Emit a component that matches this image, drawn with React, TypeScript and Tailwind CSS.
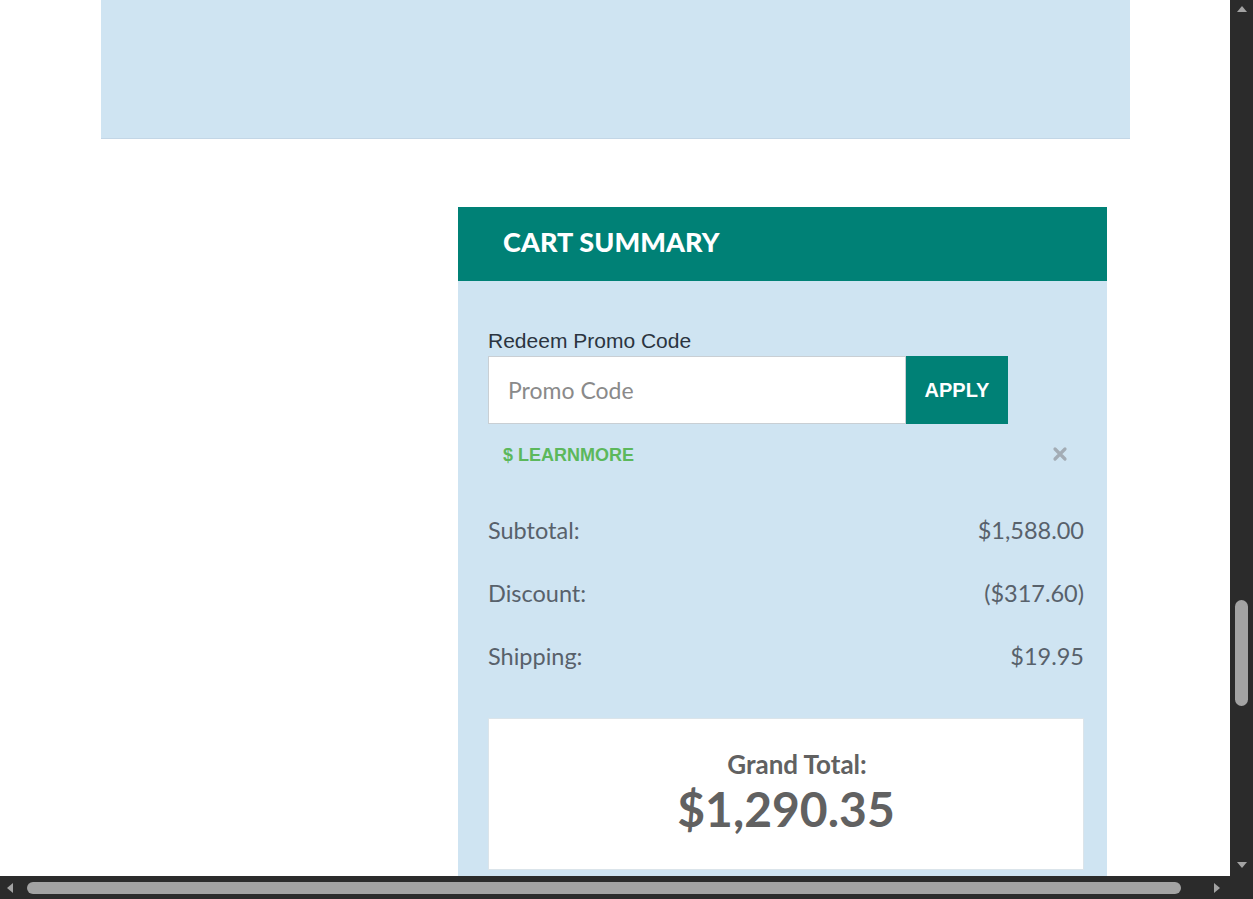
const rows = [
  { label: "Subtotal:", value: "$1,588.00" },
  { label: "Discount:", value: "($317.60)" },
  { label: "Shipping:", value: "$19.95" },
];

function Triangle({ dir }: { dir: "up" | "down" | "left" | "right" }) {
  const points: Record<string, string> = {
    up: "1,8 6,2 11,8",
    down: "1,2 6,8 11,2",
    left: "8,1 2,6 8,11",
    right: "3,1 9,6 3,11",
  };
  return (
    <svg width="12" height="12" viewBox="0 0 12 12">
      <polygon points={points[dir]} fill="#a3a3a3" />
    </svg>
  );
}

export default function App() {
  return (
    <div className="w-[1253px] h-[899px] overflow-hidden flex flex-col bg-white">
      <div className="flex h-[876px]">
        {/* Page */}
        <div className="flex-1 overflow-hidden bg-white">
          <div className="ml-[101px] w-[1029px] h-[139px] bg-[#cfe4f2] border-b border-[#c3d6e6]" />

          <div className="ml-[458px] mt-[68px] w-[649px]">
            {/* Header */}
            <div className="h-[74px] bg-[#008176] flex items-center pl-[45px]">
              <h2 className="text-white text-[27px] font-black tracking-[0.1px] font-['Lato',sans-serif] -mt-[3px]">
                CART SUMMARY
              </h2>
            </div>

            {/* Body */}
            <div className="bg-[#cfe4f2] pl-[30px] pr-[23px] pt-[47px] pb-[40px]">
              <label className="block text-[21px] leading-[26px] text-[#2b3440] font-['Liberation_Sans',Arial,sans-serif] mb-[2px]">
                Redeem Promo Code
              </label>
              <div className="flex">
                <input
                  placeholder="Promo Code"
                  className="w-[418px] h-[68px] bg-white border border-[#c9cfd4] pl-[19px] text-[23px] text-[#555] placeholder:text-[#8a8a8a] font-['Lato',sans-serif] outline-none"
                />
                <button className="w-[102px] h-[68px] bg-[#008176] text-white text-[20px] font-bold font-['Liberation_Sans',Arial,sans-serif]">
                  APPLY
                </button>
              </div>

              <div className="flex items-center justify-between mt-[18px] pl-[15px] pr-[16px]">
                <span className="text-[18px] font-bold text-[#5cb85c] font-['Liberation_Sans',Arial,sans-serif]">
                  $ LEARNMORE
                </span>
                <svg width="16" height="16" viewBox="0 0 16 16" className="-mt-[4px]">
                  <path d="M3 3 L13 13 M13 3 L3 13" stroke="#a3acb5" strokeWidth="3.2" strokeLinecap="round" />
                </svg>
              </div>

              <div className="mt-[47px] flex flex-col gap-[35px] font-['Lato',sans-serif] text-[23.5px] leading-[28px] text-[#58616b]">
                {rows.map((r) => (
                  <div key={r.label} className="flex justify-between">
                    <span>{r.label}</span>
                    <span>{r.value}</span>
                  </div>
                ))}
              </div>

              {/* Grand total */}
              <div className="mt-[48px] h-[152px] bg-white border border-[#dbe4ea] flex flex-col items-center pt-[29px] font-['Lato',sans-serif] text-[#616161]">
                <div className="text-[26px] font-bold leading-[32px] pl-[22px]">Grand Total:</div>
                <div className="text-[48px] font-bold leading-[56px] mt-[1px]">$1,290.35</div>
              </div>
            </div>
          </div>
        </div>

        {/* Vertical scrollbar */}
        <div className="w-[23px] bg-[#2b2b2b] flex flex-col items-center justify-between py-[4px]">
          <Triangle dir="up" />
          <div className="flex-1 w-full flex flex-col items-center justify-end pb-[154px]">
            <div className="w-[13px] h-[106px] rounded-full bg-[#a3a3a3]" />
          </div>
          <Triangle dir="down" />
        </div>
      </div>

      {/* Horizontal scrollbar */}
      <div className="h-[23px] bg-[#2b2b2b] flex items-center px-[5px] gap-[10px]">
        <Triangle dir="left" />
        <div className="w-[1154px] h-[12px] rounded-full bg-[#a3a3a3]" />
        <div className="ml-[20px]">
          <Triangle dir="right" />
        </div>
      </div>
    </div>
  );
}
